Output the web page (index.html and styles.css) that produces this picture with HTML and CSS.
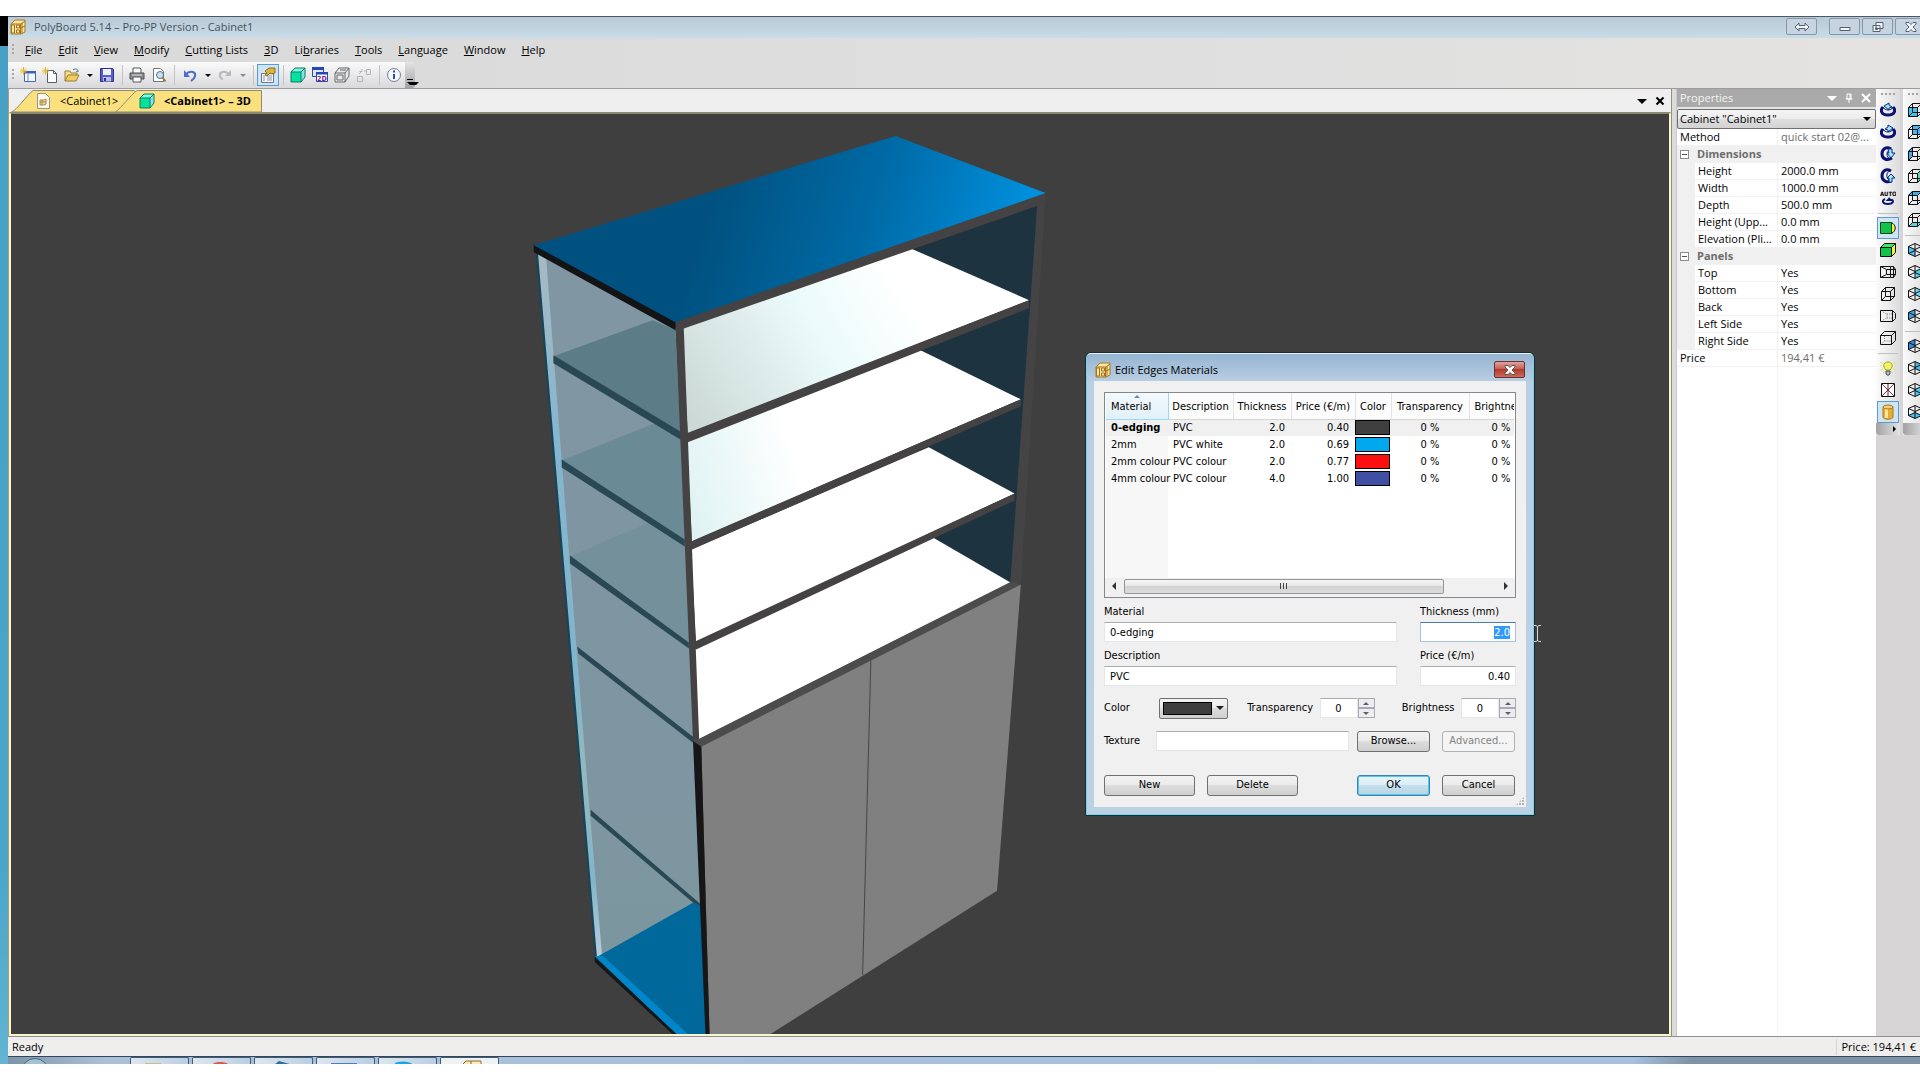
FILE: index.html
```html
<!doctype html>
<html lang="en">
<head>
    <meta charset="utf-8">
    <title>PolyBoard 5.14 – Pro-PP Version - Cabinet1</title>
    <meta name="viewport" content="width=device-width, initial-scale=1.0">
    <link rel="stylesheet" href="styles.css">
</head>
<body>

    <!-- shared icons -->
    <svg class="defs" width="0" height="0" aria-hidden="true">
        <symbol id="logo" viewBox="0 0 16 16">
            <path d="M1 5 5 1h10v12l-4 2H1z" fill="#fbe3a0" stroke="#a87a1c"/>
            <path d="M1.500 6h3v8h-3zM6.500 6h3v3h-3zM6.500 11h3v3h-3zM12 4v10M10.500 5v10M11 9l4-2M1 5h10l4-3" fill="none" stroke="#a3741a"/>
        </symbol>
        <symbol id="cube-solid" viewBox="0 0 16 16">
            <path d="M1 5 5 1h10l-4 4z" fill="#7dfbe0"/>
            <path d="M11 5l4-4v9l-4 5z" fill="#7fe6e6"/>
            <path d="M1 5h10v10H1z" fill="#04e39c"/>
            <path d="M1 5 5 1h10v9l-4 5H1zM1 5h10v10M11 5l4-4" fill="none" stroke="#127a66"/>
        </symbol>
        <symbol id="wire" viewBox="0 0 16 16">
            <path d="M1.500 5.500h9v9h-9zM5.500 1.500h9v9h-9zM1.500 5.500l4-4M10.500 5.500l4-4M1.500 14.500l4-4M10.500 14.500l4-4" fill="none" stroke="#111"/>
        </symbol>
        <symbol id="hex" viewBox="0 0 16 16">
            <path d="M1.500 4.500 8 1.500l6.500 3v7L8 14.500l-6.500-3zM1.500 4.500 8 7.500l6.500-3M8 1.500v13M1.500 11.500 8 8.500l6.500 3" fill="none" stroke="#111"/>
        </symbol>
    </svg>

    <div class="desktop"></div>

    <div class="screen">
        <div class="app">
            <header class="title-bar">
                <svg class="icon"><use href="#logo"/></svg>
                <span class="title">PolyBoard 5.14 – Pro-PP Version - Cabinet1</span>
                <button class="win-btn win-move" aria-label="Move"><svg viewBox="0 0 16 10"><path d="M1 5l4-4v2.500h6V1l4 4-4 4V6.500H5V9z"/></svg></button>
                <button class="win-btn" aria-label="Minimize"><svg viewBox="0 0 16 10"><path d="M3 5.500h10v3H3z"/></svg></button>
                <button class="win-btn" aria-label="Restore"><svg viewBox="0 0 16 10"><path d="M6 .5h7v6H6zM3 3.500h7v6H3zM5.500 6h2v1.500h-2z"/></svg></button>
                <button class="win-btn" aria-label="Close"><svg viewBox="0 0 16 10"><path d="M3 .5h3l2 2 2-2h3v1.500L10 5l3 3v1.500h-3l-2-2-2 2H3V8l3-3-3-3z"/></svg></button>
            </header>

            <nav class="menu-bar">
                <span class="grip"></span>
                <button><u>F</u>ile</button>
                <button><u>E</u>dit</button>
                <button><u>V</u>iew</button>
                <button><u>M</u>odify</button>
                <button><u>C</u>utting Lists</button>
                <button><u>3</u>D</button>
                <button>Li<u>b</u>raries</button>
                <button><u>T</u>ools</button>
                <button><u>L</u>anguage</button>
                <button><u>W</u>indow</button>
                <button><u>H</u>elp</button>
            </nav>

            <div class="toolbar-row">
                <div class="toolbar">
                    <span class="grip"></span>
                    <button aria-label="New cabinet"><svg class="icon" viewBox="0 0 16 16"><path d="M4.500 4.500h11v10h-11z" fill="#f4f8ff" stroke="#4668b0"/><path d="M4 4h12v2.500H4z" fill="#3e62b8"/><path d="M8 7v7" stroke="#6a86c4"/><path d="M3.500 0v8M0 4h7M1 1.500l5 5M6 1.500l-5 5" stroke="#e8b923"/></svg></button>
                    <button aria-label="New"><svg class="icon" viewBox="0 0 16 16"><path d="M5.500 3.500h6l3 3v9h-9z" fill="#fff" stroke="#555e70"/><path d="M11.500 3.500v3h3" fill="none" stroke="#555e70"/><path d="M3.500 0v8M0 4h7M1 1.500l5 5M6 1.500l-5 5" stroke="#e8b923"/></svg></button>
                    <button aria-label="Open"><svg class="icon" viewBox="0 0 16 16"><path d="M1 14V4h5l1 2h6v3" fill="#f3dc8a" stroke="#94803a"/><path d="M1 14 4 8h11l-3 6z" fill="#f0cd58" stroke="#94803a"/><path d="M9 3c3-2 5-1 5 2l-2-1" fill="none" stroke="#4f7a9c"/></svg></button>
                    <button class="drop" aria-label="Open recent"></button>
                    <button aria-label="Save"><svg class="icon" viewBox="0 0 16 16"><path d="M1.500 1.500h12l1 1v12h-13z" fill="#5a5fc4" stroke="#2d3190"/><path d="M4 2h8v6H4z" fill="#eef0fb"/><path d="M4 10h8v4.500H4z" fill="#b9bce6"/><path d="M5 11h2v3H5z" fill="#2d3190"/></svg></button>
                    <span class="sep"></span>
                    <button aria-label="Print"><svg class="icon" viewBox="0 0 16 16"><path d="M4 6V1h7l1 1v4" fill="#fff" stroke="#555"/><path d="M1 6h14v6H1z" fill="#8c8f94" stroke="#4c4f54"/><path d="M4 10h8v5H4z" fill="#fff" stroke="#555"/><path d="M3 8h10" stroke="#ddd"/></svg></button>
                    <button aria-label="Print preview"><svg class="icon" viewBox="0 0 16 16"><path d="M2.500 1.500h7l3 3v10h-10z" fill="#fff" stroke="#6c7480"/><circle cx="9" cy="8" r="3.500" fill="#bfe2f4" stroke="#5d7080"/><path d="M11.500 10.500l3 4" stroke="#a07c34" stroke-width="2"/></svg></button>
                    <span class="sep wide"></span>
                    <button aria-label="Undo"><svg class="icon" viewBox="0 0 16 16"><path d="M4 7c5-4 10-2 9 2-.5 3-2.500 4-4 5" fill="none" stroke="#4a6fc8" stroke-width="2"/><path d="M2 3v7h6z" fill="#4a6fc8"/></svg></button>
                    <button class="drop" aria-label="Undo list"></button>
                    <button aria-label="Redo" disabled><svg class="icon" viewBox="0 0 16 16"><path d="M12 7C7 3 2 5 3 9c.5 2 2 3 3 3" fill="none" stroke="#b9b9bb" stroke-width="2"/><path d="M14 3v6H8z" fill="#b9b9bb"/></svg></button>
                    <button class="drop" aria-label="Redo list" disabled></button>
                    <span class="sep"></span>
                    <button class="active" aria-label="Properties"><svg class="icon" viewBox="0 0 16 16"><path d="M1.500 6.500h12v9h-12z" fill="#f4f6fa" stroke="#6e7787"/><path d="M3 9h2M7 9h5M3 11h2M7 11h5M3 13h2M7 13h5" stroke="#8a94a6"/><path d="M5 4l4-3h6v5l-3 1-2-1-3 3-2-1 2-2z" fill="#dcb443" stroke="#8d6c1c"/></svg></button>
                    <span class="sep"></span>
                    <button aria-label="3D view"><svg class="icon"><use href="#cube-solid"/></svg></button>
                    <button aria-label="2D view"><svg class="icon" viewBox="0 0 16 16"><path d="M.5.500h11v9H.500z" fill="#dfe6f8" stroke="#2c49a4"/><path d="M0 0h12v3H0z" fill="#2447b4"/><path d="M4.500 5.500h11v9h-11z" fill="#fff" stroke="#2c49a4"/><path d="M4 5h12v2.500H4z" fill="#2447b4"/><text x="5" y="14" class="icon-text purple">2D</text></svg></button>
                    <button aria-label="Wireframe"><svg class="icon" viewBox="0 0 16 16"><path d="M1 6 5 1h10v8l-4 6H1zM1 6h10v9M11 6l4-5M3 8h6v5H3zM6 3h6" fill="#e9e9ea" stroke="#66686c"/></svg></button>
                    <button aria-label="Export" disabled><svg class="icon" viewBox="0 0 16 16"><path d="M1.500 9.500h5v5h-5zM10.500 2.500h4v5h-4zM3 7l3-3M6 2v2.500H3.500M8 4h2" fill="none" stroke="#b4b4b6"/></svg></button>
                    <span class="sep"></span>
                    <button aria-label="About"><svg class="icon" viewBox="0 0 16 16"><circle cx="8" cy="8" r="6.500" fill="#f5f7fc" stroke="#76809a"/><path d="M8 3.500v2M8 7v5" stroke="#2b4ea8" stroke-width="2"/></svg></button>
                </div>
                <button class="more" aria-label="Toolbar options"></button>
            </div>

            <main class="work">
                <section class="view">
                    <div class="tabs">
                        <button class="tab">
                            <svg class="tab-shape" viewBox="0 0 128 22" preserveAspectRatio="none"><path d="M.5 22C6 20 16 5 22 .5h101l5 4V22z"/></svg>
                            <svg class="icon" viewBox="0 0 16 16"><path d="M2.500.500h8l4 4v11h-12z" fill="#fbf8f0" stroke="#9a9484"/><path d="M5 7h4l2-1v5l-2 1H5zM5 9h6M7 7v5" fill="#f4dca0" stroke="#a98a4a"/></svg>
                            <span>&lt;Cabinet1&gt;</span>
                        </button>
                        <button class="tab current">
                            <svg class="tab-shape" viewBox="0 0 148 22" preserveAspectRatio="none"><path d="M.5 22C6 18 16 5 22 .5h125.500V22z"/></svg>
                            <svg class="icon"><use href="#cube-solid"/></svg>
                            <span>&lt;Cabinet1&gt; – 3D</span>
                        </button>
                        <span class="spacer"></span>
                        <button class="tab-tool" aria-label="Tab list"><svg viewBox="0 0 10 10"><path d="M0 3h10L5 8z"/></svg></button>
                        <button class="tab-tool" aria-label="Close tab"><svg viewBox="0 0 10 10"><path d="M1.500 1.500l7 7M8.500 1.500l-7 7" stroke="#000" stroke-width="2"/></svg></button>
                    </div>

                    <div class="viewport">
                        <!-- cabinet in perspective -->
                        <svg class="scene" viewBox="11 114 1657 919" preserveAspectRatio="xMidYMid slice">
                            <defs>
                                <linearGradient id="top" gradientUnits="userSpaceOnUse" x1="720" y1="150" x2="1010" y2="235">
                                    <stop offset="0" stop-color="#00517f"/>
                                    <stop offset=".5" stop-color="#006aa6"/>
                                    <stop offset="1" stop-color="#0091df"/>
                                </linearGradient>
                                <linearGradient id="back1" gradientUnits="userSpaceOnUse" x1="690" y1="430" x2="900" y2="310">
                                    <stop offset="0" stop-color="#cbd8d5"/>
                                    <stop offset=".6" stop-color="#eafafa"/>
                                    <stop offset="1" stop-color="#ffffff"/>
                                </linearGradient>
                                <linearGradient id="back2" gradientUnits="userSpaceOnUse" x1="680" y1="500" x2="790" y2="470">
                                    <stop offset="0" stop-color="#dff3f3"/>
                                    <stop offset="1" stop-color="#ffffff"/>
                                </linearGradient>
                                <linearGradient id="glass" gradientUnits="userSpaceOnUse" x1="0" y1="260" x2="0" y2="950">
                                    <stop offset="0" stop-color="#8196a3"/>
                                    <stop offset="1" stop-color="#7c96a0"/>
                                </linearGradient>
                                <linearGradient id="strip" gradientUnits="userSpaceOnUse" x1="0" y1="260" x2="0" y2="950">
                                    <stop offset="0" stop-color="#a6bac4"/>
                                    <stop offset=".25" stop-color="#86b6cf"/>
                                    <stop offset=".6" stop-color="#82b4cc"/>
                                    <stop offset=".75" stop-color="#94b9bd"/>
                                    <stop offset=".9" stop-color="#83b5c9"/>
                                    <stop offset="1" stop-color="#b4cadb"/>
                                </linearGradient>
                            </defs>

                            <g transform="matrix(1.033 0 0 1 -17 0)">
                                <!-- left side -->
                                <path d="M535 254 592 956l4 0L539 254z" fill="#17465a"/>
                                <path d="M537 252 594 955l6 0 99-50L670 328z" fill="url(#strip)"/>
                                <path d="M545 258 670 328l26 580-97 46L583 760 560 460z" fill="url(#glass)"/>
                                <path d="M552 356l96-36 22 10 5 103z" fill="#5c7d87"/>
                                <path d="M560 460l90-37 25 14 4 103z" fill="#6a8b95"/>
                                <path d="M568 556l80-36 31 20 4 102z" fill="#73909b"/>
                                <g fill="#294854">
                                    <path d="M552 355l124 77v8L552 363z"/>
                                    <path d="M560 459l119 80v7L560 467z"/>
                                    <path d="M568 555l115 87v6L568 563z"/>
                                    <path d="M575 646l112 90v6L576 653z"/>
                                    <path d="M588 809l106 94v5L588 815z"/>
                                </g>
                                <path d="M594 956l93-54 8 3 6 128h-28z" fill="#00689b"/>
                                <path d="M592 955l8 0 82 78h-12z" fill="#0086c9"/>
                                <path d="M592 956l79 77h-4L592 961z" fill="#10181c"/>

                                <!-- right side and back -->
                                <path d="M897 248l125-44-28 378-80 20z" fill="#1d3440"/>
                                <path d="M1020 203l8-10-24 391-10-3z" fill="#454445"/>
                                <path d="M676 328l221-80 115 52-330 134z" fill="url(#back1)"/>
                                <path d="M681 441l226-91 97 49-318 142z" fill="url(#back2)"/>
                                <path d="M685 549l230-102 83 46-308 149z" fill="#fff"/>
                                <path d="M688 649l231-112 75 45-302 157z" fill="#fff"/>

                                <!-- edges -->
                                <g fill="#444243">
                                    <path d="M681 433l331-133v8L682 442z"/>
                                    <path d="M685 541l319-142v7L686 549z"/>
                                    <path d="M689 641l309-148v7L690 649z"/>
                                    <path d="M670 322l8 4 15 414-6 0z"/>
                                    <path d="M670 322l358-129v10L676 329l-6 2z"/>
                                </g>
                                <path d="M687 740l6-2 302-157 9 3-309 163z" fill="#4c4c4c"/>

                                <!-- top -->
                                <path d="M533 244l137 77v9L533 252z" fill="#121416"/>
                                <path d="M533 245 883 136l145 57-358 129z" fill="url(#top)"/>

                                <!-- doors -->
                                <path d="M695 746l309-162-23 306-219 143h-59z" fill="#808080"/>
                                <path d="M687 740l8 6 8 287h-4z" fill="#161616"/>
                                <path d="M855 655l4 4-8 315" fill="none" stroke="#484848"/>
                            </g>
                        </svg>
                    </div>

                    <!-- edge materials dialog -->
                    <form class="dialog" onsubmit="return false">
                        <div class="dialog-title">
                            <svg class="icon"><use href="#logo"/></svg>
                            <span>Edit Edges Materials</span>
                            <button type="button" class="dialog-close" aria-label="Close"><svg viewBox="0 0 12 10"><path d="M1 .5h3l2 2 2-2h3v1.500L8 5l3 3v1.500H8l-2-2-2 2H1V8l3-3-3-3z"/></svg></button>
                        </div>
                        <div class="dialog-body">
                            <div class="list">
                                <div class="list-view">
                                    <table>
                                        <colgroup>
                                            <col class="c-material"><col class="c-desc"><col class="c-thick"><col class="c-price"><col class="c-color"><col class="c-trans"><col class="c-bright">
                                        </colgroup>
                                        <thead>
                                            <tr><th class="sorted">Material</th><th>Description</th><th>Thickness</th><th>Price (€/m)</th><th>Color</th><th>Transparency</th><th>Brightne</th></tr>
                                        </thead>
                                        <tbody>
                                            <tr class="selected"><td>0-edging</td><td>PVC</td><td>2.0</td><td>0.40</td><td><span class="swatch dark"></span></td><td>0 %</td><td>0 %</td></tr>
                                            <tr><td>2mm</td><td>PVC white</td><td>2.0</td><td>0.69</td><td><span class="swatch cyan"></span></td><td>0 %</td><td>0 %</td></tr>
                                            <tr><td>2mm colour</td><td>PVC colour</td><td>2.0</td><td>0.77</td><td><span class="swatch red"></span></td><td>0 %</td><td>0 %</td></tr>
                                            <tr><td>4mm colour</td><td>PVC colour</td><td>4.0</td><td>1.00</td><td><span class="swatch blue"></span></td><td>0 %</td><td>0 %</td></tr>
                                        </tbody>
                                    </table>
                                </div>
                                <div class="scroll">
                                    <span class="arrow left"></span>
                                    <div class="track"><div class="thumb"><i></i><i></i><i></i></div></div>
                                    <span class="arrow right"></span>
                                </div>
                            </div>

                            <div class="fields">
                                <label for="material">Material</label>
                                <label for="thickness">Thickness (mm)</label>
                                <input type="text" id="material" value="0-edging">
                                <div class="number focused"><input type="text" id="thickness" value="2.0"></div>
                                <label for="description">Description</label>
                                <label for="price">Price (€/m)</label>
                                <input type="text" id="description" value="PVC">
                                <div class="number"><input type="text" id="price" value="0.40"></div>
                            </div>

                            <div class="row color-row">
                                <label for="color" class="lead">Color</label>
                                <button type="button" id="color" class="color-btn"><span class="swatch dark"></span><span class="caret"></span></button>
                                <label for="transparency">Transparency</label>
                                <span class="spin"><input type="text" id="transparency" value="0"><span class="steps"><button type="button" aria-label="Up"></button><button type="button" aria-label="Down"></button></span></span>
                                <label for="brightness">Brightness</label>
                                <span class="spin"><input type="text" id="brightness" value="0"><span class="steps"><button type="button" aria-label="Up"></button><button type="button" aria-label="Down"></button></span></span>
                            </div>

                            <div class="row texture-row">
                                <label for="texture" class="lead">Texture</label>
                                <input type="text" id="texture">
                                <button type="button" class="btn small">Browse...</button>
                                <button type="button" class="btn small" disabled>Advanced...</button>
                            </div>

                            <div class="row buttons">
                                <button type="button" class="btn">New</button>
                                <button type="button" class="btn">Delete</button>
                                <span class="spacer"></span>
                                <button type="submit" class="btn small default">OK</button>
                                <button type="button" class="btn small">Cancel</button>
                            </div>
                        </div>
                        <span class="size-grip"></span>
                        <svg class="cursor" viewBox="0 0 7 17"><path d="M0 .5h2l1.500 1L5 .5h2M3.500 1v15M0 16.500h2l1.500-1 1.500 1h2"/></svg>
                    </form>
                </section>

                <aside class="properties">
                    <div class="panel-head">
                        <span>Properties</span>
                        <svg viewBox="0 0 10 10"><path d="M0 3h10L5 8z" fill="#fff"/></svg>
                        <svg viewBox="0 0 10 10"><path d="M3 1h4v5H3zM1.500 6h7M5 6v4M6 1v5" fill="none" stroke="#fff"/></svg>
                        <svg viewBox="0 0 10 10"><path d="M1 1l8 8M9 1l-8 8" stroke="#fff" stroke-width="2"/></svg>
                    </div>
                    <div class="picker">
                        <select aria-label="Object"><option>Cabinet "Cabinet1"</option></select>
                    </div>
                    <table class="grid">
                        <colgroup><col class="g-pad"><col class="g-name"><col></colgroup>
                        <tr><td colspan="2">Method</td><td class="muted">quick start 02@...</td></tr>
                        <tr class="group"><th><i class="minus"></i></th><th colspan="2">Dimensions</th></tr>
                        <tr><td></td><td>Height</td><td>2000.0 mm</td></tr>
                        <tr><td></td><td>Width</td><td>1000.0 mm</td></tr>
                        <tr><td></td><td>Depth</td><td>500.0 mm</td></tr>
                        <tr><td></td><td>Height (Upp...</td><td>0.0 mm</td></tr>
                        <tr><td></td><td>Elevation (Pli...</td><td>0.0 mm</td></tr>
                        <tr class="group"><th><i class="minus"></i></th><th colspan="2">Panels</th></tr>
                        <tr><td></td><td>Top</td><td>Yes</td></tr>
                        <tr><td></td><td>Bottom</td><td>Yes</td></tr>
                        <tr><td></td><td>Back</td><td>Yes</td></tr>
                        <tr><td></td><td>Left Side</td><td>Yes</td></tr>
                        <tr><td></td><td>Right Side</td><td>Yes</td></tr>
                        <tr><td colspan="2">Price</td><td class="muted">194,41 €</td></tr>
                    </table>
                    <div class="grid-rest"></div>
                </aside>

                <div class="side-bars">
                    <div class="side-bar">
                        <span class="dots"></span>
                        <button aria-label="Rotate left"><svg class="icon" viewBox="0 0 16 16"><path d="M3 5c-3 3-2 8 5 8s8-5 5-8" fill="none" stroke="#0b1170" stroke-width="3"/><path d="M3 5c2 4 8 4 10 0" fill="none" stroke="#0b1170"/><path d="M9 1 4 4l5 4V6l3-1-3-2z" fill="#9beafa" stroke="#0b2c80"/></svg></button>
                        <button aria-label="Rotate right"><svg class="icon" viewBox="0 0 16 16"><path d="M3 5c-3 3-2 8 5 8s8-5 5-8" fill="none" stroke="#0b1170" stroke-width="3"/><path d="M3 5c2 4 8 4 10 0" fill="none" stroke="#0b1170"/><path d="M8 1l5 3-5 4V6L5 5l3-2z" fill="#9beafa" stroke="#0b2c80"/></svg></button>
                        <button aria-label="Rotate down"><svg class="icon" viewBox="0 0 16 16"><path d="M11 3C6 0 2 3 2 8s5 7 10 4" fill="none" stroke="#0b1170" stroke-width="3"/><path d="M10 4c-4 1-4 7 0 9" fill="none" stroke="#0b1170"/><path d="M8 3h4v4h3l-4 5-4-5h2z" fill="#9beafa" stroke="#0b2c80"/></svg></button>
                        <button aria-label="Rotate up"><svg class="icon" viewBox="0 0 16 16"><path d="M11 3C6 0 2 3 2 8s5 7 9 5" fill="none" stroke="#0b1170" stroke-width="3"/><path d="M10 3c-4 1-4 7-1 9" fill="none" stroke="#0b1170"/><path d="M11 6l4 4h-3v4H9v-4H7z" fill="#9beafa" stroke="#0b2c80"/></svg></button>
                        <button aria-label="Auto rotate"><svg class="icon" viewBox="0 0 16 16"><text x="0" y="6" class="icon-text">AUTO</text><path d="M5 9c-4 2-2 5 3 5s6-3 4-4H8l2-2" fill="none" stroke="#0b1170" stroke-width="2"/></svg></button>
                        <span class="line"></span>
                        <button class="active" aria-label="Solid perspective"><svg class="icon" viewBox="0 0 16 16"><path d="M11 2.500l2 1c3 3 3 6 0 9l-2 1z" fill="#f6f13c" stroke="#111"/><path d="M.5 2.500h11v11H.500z" fill="#12c24a" stroke="#0a4d18"/></svg></button>
                        <button aria-label="Solid"><svg class="icon" viewBox="0 0 16 16"><path d="M.5 5.500l4-4h11l-4 4z" fill="#39ee5e" stroke="#111"/><path d="M11.500 5.500l4-4v9l-4 4z" fill="#f6f13c" stroke="#111"/><path d="M.5 5.500h11v9H.500z" fill="#12c24a" stroke="#111"/></svg></button>
                        <button aria-label="Wire perspective"><svg class="icon" viewBox="0 0 16 16"><path d="M.5 2.500h10v11H.500zM10.500 2.500h3l2 3v5l-2 3h-3M.5 2.500l6 3M.5 13.500l6-3M6.500 5.500h9M6.500 10.500h9M6.500 5.500v5M13.500 2.500v11" fill="none" stroke="#111"/></svg></button>
                        <button aria-label="Wire"><svg class="icon"><use href="#wire"/></svg></button>
                        <button aria-label="Hidden perspective"><svg class="icon" viewBox="0 0 16 16"><path d="M.5 2.500h12l3 3v5l-3 3H.500zM12.500 2.500v11" fill="none" stroke="#111"/><path d="M3 4l4 2v4l-4 2M7 6h5M7 10h5" fill="none" stroke="#888" stroke-dasharray="1 1"/></svg></button>
                        <button aria-label="Hidden lines"><svg class="icon" viewBox="0 0 16 16"><path d="M.5 5.500l4-4h11v9l-4 4H.500zM.5 5.500h11v9M11.500 5.500l4-4" fill="none" stroke="#111"/><path d="M4.500 6v5H11M4.500 11l-3 3" fill="none" stroke="#888" stroke-dasharray="1 1"/></svg></button>
                        <span class="line"></span>
                        <button aria-label="Lighting"><svg class="icon" viewBox="0 0 16 16"><path d="M0 2l3 2M16 2l-3 2M0 10l3-1M16 10l-3-1M0 6h2M14 6h2M3 13l2-2M13 13l-2-2" stroke="#dfe861"/><path d="M6 10C2 6 4 2 8 2s6 4 2 8z" fill="#f2f65a" stroke="#9aa02c"/><path d="M6 11h4v3L8 15.500 6 14z" fill="#a9b7c4" stroke="#555"/></svg></button>
                        <button aria-label="Cross"><svg class="icon" viewBox="0 0 16 16"><path d="M1.500 1.500h13v13h-13z" fill="#fff" stroke="#111"/><path d="M2 2l12 12M14 2 2 14" stroke="#a02438"/><path d="M8 2v12" stroke="#333"/></svg></button>
                        <button class="active" aria-label="Texture"><svg class="icon" viewBox="0 0 16 16"><path d="M3 3v10c0 3 10 3 10 0V3z" fill="#e6ac34" stroke="#a8781c"/><path d="M5 4v10h3V4z" fill="#fbe596"/><ellipse cx="8" cy="3" rx="5" ry="2" fill="#f3cf70" stroke="#a8781c"/></svg></button>
                        <span class="cap"></span>
                    </div>
                    <div class="side-bar">
                        <span class="dots"></span>
                        <button aria-label="Front"><svg class="icon" viewBox="0 0 16 16"><path d="M1 5h10v10H1z" fill="#3fc4f0"/><use href="#wire"/></svg></button>
                        <button aria-label="Back"><svg class="icon" viewBox="0 0 16 16"><path d="M5 1h10v10H5z" fill="#4fb4ec"/><use href="#wire"/></svg></button>
                        <button aria-label="Left"><svg class="icon" viewBox="0 0 16 16"><path d="M1 5l4-4v10l-4 4z" fill="#4aa8e8"/><use href="#wire"/></svg></button>
                        <button aria-label="Right"><svg class="icon" viewBox="0 0 16 16"><path d="M11 5l4-4v10l-4 4z" fill="#62d4b8"/><use href="#wire"/></svg></button>
                        <button aria-label="Top"><svg class="icon" viewBox="0 0 16 16"><path d="M1 5l4-4h10l-4 4z" fill="#4aa8e8"/><use href="#wire"/></svg></button>
                        <button aria-label="Bottom"><svg class="icon" viewBox="0 0 16 16"><path d="M1 15l4-4h10l-4 4z" fill="#62d4d8"/><use href="#wire"/></svg></button>
                        <span class="line"></span>
                        <button aria-label="Corner 1"><svg class="icon" viewBox="0 0 16 16"><path d="M1.500 4.500 8 7.500v7l-6.500-3z" fill="#4cc0f0"/><use href="#hex"/></svg></button>
                        <button aria-label="Corner 2"><svg class="icon" viewBox="0 0 16 16"><path d="M8 7.500l6.500-3v7L8 14.500z" fill="#4cd0e8"/><use href="#hex"/></svg></button>
                        <button aria-label="Corner 3"><svg class="icon" viewBox="0 0 16 16"><path d="M8 1.500l6.500 3v7L8 8.500z" fill="#6fd4ee"/><use href="#hex"/></svg></button>
                        <button aria-label="Corner 4"><svg class="icon" viewBox="0 0 16 16"><path d="M1.500 4.500 8 1.500v7l-6.500 3z" fill="#3fa4e4"/><use href="#hex"/></svg></button>
                        <span class="line"></span>
                        <button aria-label="Corner 5"><svg class="icon" viewBox="0 0 16 16"><path d="M1.500 4.500 8 1.500v7l-6.500 3z" fill="#2f8ee4"/><use href="#hex"/></svg></button>
                        <button aria-label="Corner 6"><svg class="icon" viewBox="0 0 16 16"><path d="M8 1.500l6.500 3v7L8 8.500z" fill="#4cb8e8"/><use href="#hex"/></svg></button>
                        <button aria-label="Corner 7"><svg class="icon" viewBox="0 0 16 16"><path d="M8 7.500l6.500-3v7L8 14.500z" fill="#4cc8f0"/><use href="#hex"/></svg></button>
                        <button aria-label="Corner 8"><svg class="icon" viewBox="0 0 16 16"><path d="M1.500 11.500 8 8.500l6.500 3-6.500 3z" fill="#4cc0f0"/><use href="#hex"/></svg></button>
                        <span class="cap"></span>
                    </div>
                </div>
            </main>

            <footer class="status-bar">
                <span>Ready</span>
                <span class="status-price">Price: 194,41 €</span>
            </footer>
        </div>

        <div class="taskbar">
            <span class="orb"></span>
            <span class="task"><svg viewBox="0 0 56 7"><path d="M14 5h16v2H14z" fill="#c9bd84"/></svg></span>
            <span class="task"><svg viewBox="0 0 56 7"><path d="M19 7c2-4 14-4 17 0z" fill="#e0564a"/></svg></span>
            <span class="task"><svg viewBox="0 0 56 7"><path d="M19 7l5-4 14 4z" fill="#2d6d9c"/></svg></span>
            <span class="task"><svg viewBox="0 0 56 7"><path d="M14 5h26v2H14z" fill="#4b79cc"/></svg></span>
            <span class="task"><svg viewBox="0 0 56 7"><path d="M15 7c1-5 18-4 19 0z" fill="#18a5e6"/></svg></span>
            <span class="task on"><svg viewBox="0 0 56 7"><path d="M21 7l4-4h15v4M30 3v4" fill="#fbe9b8" stroke="#9a6a2c"/></svg></span>
        </div>
    </div>

    <script>
        const thickness = document.getElementById('thickness');
        thickness.focus();
        thickness.select();
    </script>

</body>
</html>
```
FILE: styles.css
```css
* {
    box-sizing: border-box;
}
body {
    display: flex;
    height: 100vh;
    margin: 0;
    padding: 16px 0;
    overflow: hidden;
    background-color: #fff;
    color: #000;
    font-family: "Open Sans", sans-serif;
    font-size: 11px;
    line-height: 16px;
}
button, input, select {
    margin: 0;
    padding: 0;
    border: none;
    border-radius: 0;
    background: none;
    color: inherit;
    font: inherit;
    outline: none;
}
svg {
    display: block;
}
.defs {
    position: absolute;
}
.icon {
    width: 16px;
    height: 16px;
    flex: none;
}
.icon-text {
    font: bold 6px "DejaVu Sans Condensed", sans-serif;
}
.purple {
    fill: #7a1c9c;
    font-size: 7px;
}
.spacer {
    flex: 1;
}

/* desktop behind the window */
.desktop {
    width: 8px;
    background: linear-gradient(#000 30px, #46a1c4 30px, #49a5c8 80%, #62b4d2);
}
.screen {
    flex: 1;
    min-width: 0;
    display: flex;
    flex-direction: column;
}
.app {
    flex: 1;
    min-height: 0;
    display: flex;
    flex-direction: column;
    background-color: #dcdbdb;
}

.title-bar {
    display: flex;
    align-items: center;
    height: 22px;
    padding: 0 0 2px 2px;
    overflow: hidden;
    border-top: 1px solid #4b5763;
    background: linear-gradient(#b9c9d5, #c9dce8);
}
.title {
    flex: 1;
    margin-left: 8px;
    color: #46525e;
}
.win-btn {
    flex: none;
    width: 31px;
    height: 17px;
    margin-left: 2px;
    border: 1px solid #8897a6;
    border-radius: 2px;
    background-color: #c5d4e0;
}
.win-move {
    margin-right: 10px;
}
.win-btn:last-child {
    margin-right: -6px;
}
.win-btn svg {
    width: 16px;
    height: 10px;
    margin: 0 auto;
    fill: #f2f6f9;
    stroke: #536070;
}

.grip {
    flex: none;
    width: 2px;
    height: 12px;
    margin: 0 3px 0 4px;
    background: repeating-linear-gradient(#a9a9ab 0 2px, transparent 2px 4px);
}
.menu-bar {
    display: flex;
    align-items: center;
    height: 24px;
    background: linear-gradient(90deg, #d9d9da, #e4e3e2);
}
.menu-bar button {
    padding: 0 8px;
}
.toolbar-row {
    display: flex;
    height: 26px;
    background: linear-gradient(90deg, #d9d9da, #e4e3e2);
}
.toolbar {
    display: flex;
    align-items: center;
    background: linear-gradient(#fafafa, #d9d9dc);
}
.toolbar button, .side-bar button {
    flex: none;
    display: flex;
    align-items: center;
    justify-content: center;
    width: 22px;
    height: 22px;
}
.toolbar .drop {
    width: 13px;
}
.drop::after {
    border: 3px solid transparent;
    border-top: 3px solid #000;
    border-bottom: none;
    content: "";
}
.drop:disabled::after {
    border-top-color: #8c8c8e;
}
.toolbar .active, .side-bar .active {
    border: 1px solid #5a9bd6;
    background-color: #cfe5f5;
}
.sep {
    width: 1px;
    height: 20px;
    margin: 0 3px 0 4px;
    background-color: #c3c3c6;
}
.sep.wide {
    margin-right: 4px;
}
.more {
    width: 10px;
    border-radius: 0 3px 3px 0;
    background: linear-gradient(#e4e4e5, #a2a2a5);
}
.more::after {
    display: block;
    width: 6px;
    margin: 14px 0 0 2px;
    border: 3px solid transparent;
    border-top: 3px solid #000;
    border-bottom: none;
    content: "";
}
.more::before {
    display: block;
    width: 6px;
    height: 1px;
    margin: 14px 0 -12px 2px;
    background-color: #000;
    content: "";
}

.work {
    flex: 1;
    min-height: 0;
    display: flex;
    border-top: 1px solid #9c9c9c;
    border-bottom: 1px solid #909090;
}
.view {
    position: relative;
    flex: 1;
    min-width: 0;
    display: flex;
    flex-direction: column;
    margin-right: 4px;
    border-right: 1px solid #8f9474;
    border-left: 1px solid #b59d6c;
    background-color: #efefef;
}
.tabs {
    display: flex;
    height: 23px;
    padding: 1px 2px 0;
}
.tab {
    position: relative;
    display: flex;
    align-items: center;
    width: 128px;
    margin-right: -24px;
    padding-left: 24px;
}
.tab.current {
    width: 147px;
    font-weight: bold;
}
.tab span, .tab .icon {
    position: relative;
}
.tab span {
    margin-left: 9px;
}
.tab-shape {
    position: absolute;
    top: 0;
    left: 0;
    width: 100%;
    height: 100%;
    fill: #fbe07e;
    stroke: #8e8a78;
}
.tab-tool {
    width: 18px;
    padding: 0 4px;
}
.tab-tool svg {
    width: 10px;
    height: 10px;
}
.viewport {
    flex: 1;
    min-height: 0;
    border: 2px solid #f9f7cf;
    border-top-color: #8d8a72;
    background-color: #403f40;
}
.scene {
    width: 100%;
    height: 100%;
}

/* dialog */
.dialog {
    position: absolute;
    top: 264px;
    left: 1077px;
    width: 448px;
    padding: 0 7px 7px;
    border: 1px solid #6fd6ee;
    border-top-color: #e6f1f8;
    border-radius: 5px 5px 0 0;
    background: linear-gradient(#96b4d1, #b9cfe3 28px, #bad2e4);
    box-shadow: 0 0 0 1px #1c2b33;
    font-family: "DejaVu Sans Condensed", sans-serif;
    line-height: 14px;
}
.dialog-title {
    display: flex;
    align-items: center;
    height: 27px;
    padding: 4px 1px 0;
    font-family: "Open Sans", sans-serif;
}
.dialog-title span {
    flex: 1;
    margin-left: 4px;
}
.dialog-close {
    width: 31px;
    height: 17px;
    border: 1px solid #6d3038;
    border-radius: 2px;
    background: linear-gradient(#dda59d, #c4574a 50%, #b03c31 50%, #cc6a58);
}
.dialog-close svg {
    width: 12px;
    height: 10px;
    margin: 0 auto;
    fill: #fff;
    stroke: #6a5052;
}
.dialog-body {
    padding: 11px 10px 11px;
    background-color: #f0f0f0;
}
.list {
    height: 206px;
    display: flex;
    flex-direction: column;
    border: 1px solid #828790;
    background-color: #fff;
}
.list-view {
    flex: 1;
    overflow: hidden;
    margin: 0 1px;
    background: linear-gradient(90deg, #f7f7f7 62px, #fff 62px);
}
.list table {
    width: 427px;
    border-collapse: collapse;
    table-layout: fixed;
}
.c-material { width: 62px; }
.c-desc { width: 65px; }
.c-thick { width: 58px; }
.c-price { width: 64px; }
.c-color { width: 36px; }
.c-trans { width: 78px; }
.c-bright { width: 64px; }
.list th {
    height: 26px;
    padding: 3px 0 0;
    border-right: 1px solid #e2e3ea;
    border-bottom: 1px solid #d5d5d5;
    background-color: #fcfcfc;
    font-weight: normal;
    text-align: center;
    white-space: nowrap;
}
.list th:last-child {
    padding-left: 5px;
    text-align: left;
}
.list .sorted {
    position: relative;
    border-color: #96d9f9;
    background: linear-gradient(#f2f9fc, #e1f1f9);
    text-align: left;
    padding-left: 5px;
}
.sorted::after {
    position: absolute;
    top: 2px;
    left: 28px;
    border: 3px solid transparent;
    border-top: none;
    border-bottom: 3px solid #6c8fa5;
    content: "";
}
.list td {
    height: 17px;
    padding: 0 6px;
    white-space: nowrap;
}
.list td:first-child, .list td:nth-child(2) {
    padding: 0 0 0 5px;
}
.list td:nth-child(3), .list td:nth-child(4) {
    text-align: right;
}
.list td:nth-child(5) {
    padding: 0 1px 0 0;
}
.list td:nth-child(n+6) {
    text-align: center;
}
.list .selected {
    background-color: #f0f0f0;
}
.selected td:first-child {
    font-weight: bold;
}
.swatch {
    display: block;
    height: 15px;
    border: 1px solid #000;
}
.dark { background-color: #3f3f40; }
.cyan { background-color: #00a8ee; }
.red { background-color: #fc1010; }
.blue { background-color: #3f50a4; }

.scroll {
    display: flex;
    align-items: center;
    height: 19px;
    padding: 0 7px 3px;
    background-color: #f0f0f0;
}
.arrow {
    border: 4px solid transparent;
}
.arrow.left {
    border-right-color: #333;
    border-left: none;
}
.arrow.right {
    border-left-color: #333;
    border-right: none;
}
.track {
    flex: 1;
    padding: 0 8px;
}
.thumb {
    display: flex;
    align-items: center;
    justify-content: center;
    gap: 2px;
    width: 86%;
    height: 15px;
    border: 1px solid #979797;
    border-radius: 2px;
    background: linear-gradient(#f5f5f5, #e6e6e6 50%, #d3d3d3 50%, #dcdcdc);
}
.thumb i {
    width: 1px;
    height: 6px;
    background-color: #444;
}

.fields {
    display: grid;
    grid-template-columns: 1fr 96px;
    grid-template-rows: 24px 20px 24px 20px;
    column-gap: 23px;
    align-items: center;
}
.fields label {
    padding-top: 4px;
}
.dialog input {
    width: 100%;
    height: 20px;
    padding: 0 5px;
    border: 1px solid #e3e6ea;
    border-top-color: #abadb3;
    background-color: #fff;
}
.dialog input::selection {
    background-color: #3399ff;
    color: #fff;
}
.number input {
    text-align: right;
}
.number.focused input {
    border-color: #a8c4dc;
    border-top-color: #4c7cae;
}
.row {
    display: flex;
    align-items: center;
    height: 22px;
}
.color-row {
    margin-top: 11px;
}
.lead {
    width: 52px;
}
.color-btn {
    display: flex;
    align-items: center;
    gap: 4px;
    width: 69px;
    height: 21px;
    margin: 0 17px 0 3px;
    padding: 0 3px;
    border: 1px solid #707070;
    border-radius: 2px;
    background: linear-gradient(#f2f2f2, #ebebeb 50%, #dddddd 50%, #cfcfcf);
}
.color-btn .swatch {
    width: 50px;
    height: 13px;
}
.caret {
    border: 4px solid transparent;
    border-top: 4px solid #222;
    border-bottom: none;
}
.spin {
    display: flex;
    width: 55px;
    height: 20px;
    margin-left: auto;
}
.color-row label:nth-of-type(n+2) {
    width: 68px;
    margin-right: 6px;
    text-align: right;
}
.color-row label:last-of-type {
    width: 54px;
    margin-left: 26px;
}
.spin input {
    flex: 1;
    min-width: 0;
    text-align: center;
}
.steps {
    display: flex;
    flex-direction: column;
    width: 17px;
}
.steps button {
    flex: 1;
    display: flex;
    align-items: center;
    justify-content: center;
    border: 1px solid #a9a9b4;
    background-color: #ededf0;
}
.steps button::after {
    border: 3px solid transparent;
    border-bottom: 3px solid #5d5d74;
    border-top: none;
    content: "";
}
.steps button:last-child::after {
    border-top: 3px solid #5d5d74;
    border-bottom: none;
}
.texture-row {
    margin-top: 11px;
}
.texture-row input {
    flex: 1;
    min-width: 0;
    margin-right: 8px;
}
.btn {
    width: 91px;
    height: 21px;
    border: 1px solid #707070;
    border-radius: 3px;
    background: linear-gradient(#f2f2f2, #ebebeb 50%, #dddddd 50%, #cfcfcf);
}
.btn.small {
    width: 73px;
}
.btn + .btn {
    margin-left: 12px;
}
.btn:disabled {
    border-color: #adb2b5;
    background: #f4f4f4;
    color: #838383;
}
.btn.default {
    border-color: #3c7fb1;
    background: linear-gradient(#e8f3f8, #dcecf4 50%, #c4dfec 50%, #b5d6e6);
    box-shadow: inset 0 0 0 1px #52c8ea;
}
.buttons {
    margin-top: 22px;
}
.buttons, .texture-row {
    padding-right: 1px;
}
.size-grip {
    position: absolute;
    right: 9px;
    bottom: 9px;
    width: 8px;
    height: 8px;
    background: radial-gradient(circle at 1px 1px, #b4b8bc 1px, transparent 1px) 0 0 / 3px 3px;
    clip-path: polygon(100% 0, 100% 100%, 0 100%);
}
.cursor {
    position: absolute;
    top: 271px;
    left: 447px;
    width: 7px;
    height: 17px;
    fill: none;
    stroke: #d4d4d4;
}

/* properties panel */
.properties {
    display: flex;
    flex-direction: column;
    width: 200px;
    border-left: 1px solid #c9c9c9;
    background-color: #fff;
}
.panel-head {
    display: flex;
    align-items: center;
    gap: 7px;
    height: 18px;
    padding: 0 5px 0 3px;
    background-color: #aaaaaa;
    color: #f4f4f4;
}
.panel-head span {
    flex: 1;
}
.panel-head svg {
    width: 10px;
    height: 10px;
}
.picker {
    position: relative;
    padding-top: 2px;
    background-color: #e4e4e4;
}
.picker select {
    display: block;
    width: 100%;
    height: 20px;
    padding-left: 2px;
    appearance: none;
    border: 1px solid #6f6f6f;
    border-radius: 2px;
    background: linear-gradient(#f4f4f4, #ececec 50%, #dedede 50%, #d2d2d2);
    letter-spacing: normal;
}
.picker::after {
    position: absolute;
    top: 10px;
    right: 5px;
    border: 4px solid transparent;
    border-top: 4px solid #000;
    border-bottom: none;
    content: "";
}
.grid {
    width: 100%;
    border-spacing: 0;
    table-layout: fixed;
    line-height: 16px;
}
.g-pad { width: 17px; }
.g-name { width: 83px; }
.grid td, .grid th {
    height: 17px;
    padding: 0 0 0 3px;
    border-bottom: 1px solid #f1f1f1;
    text-align: left;
    white-space: nowrap;
}
.grid td + td {
    border-left: 1px solid #f1f1f1;
}
.grid td:first-child:not([colspan]) {
    border-color: #f0f0f0;
    background-color: #f0f0f0;
}
.group {
    background-color: #f0f0f0;
    color: #6d6d6d;
}
.grid .muted {
    color: #6d6d6d;
}
.minus {
    display: block;
    width: 9px;
    height: 9px;
    border: 1px solid #8b8b8b;
    background: linear-gradient(#555, #555) center / 5px 1px no-repeat #fff;
}
.grid-rest {
    flex: 1;
    margin-left: 100px;
    border-left: 1px solid #f4f4f4;
}

.side-bars {
    display: flex;
    gap: 3px;
    width: 44px;
    overflow: hidden;
    background-color: #d6d4d5;
}
.side-bar {
    flex: none;
    display: flex;
    flex-direction: column;
    align-items: center;
    align-self: flex-start;
    width: 24px;
    background: linear-gradient(90deg, #fbfbfb, #dcdcde);
}
.dots {
    width: 14px;
    height: 2px;
    margin: 4px 0;
    background: repeating-linear-gradient(90deg, #a3a3a5 0 2px, transparent 2px 4px);
}
.line {
    width: 20px;
    height: 1px;
    margin: 4px 0 3px;
    background-color: #c0c0c3;
}
.cap {
    width: 24px;
    height: 12px;
    border-radius: 0 0 3px 3px;
    background: linear-gradient(90deg, #a2a2a5, #e4e4e5);
}
.cap::after {
    display: block;
    width: 3px;
    margin: 3px 0 0 17px;
    border: 3px solid transparent;
    border-left: 3px solid #000;
    border-right: none;
    content: "";
}

.status-bar {
    display: flex;
    justify-content: space-between;
    align-items: center;
    height: 19px;
    padding: 1px 4px 0;
    background-color: #efeeec;
}
.status-price {
    padding-left: 4px;
    border-left: 1px solid #d4d4d4;
}

.taskbar {
    display: flex;
    gap: 3px;
    height: 8px;
    padding-left: 13px;
    overflow: hidden;
    border-top: 1px solid #33475c;
    background: linear-gradient(90deg, #7d94a8, #a9c0d8 5%, #a6c0de 85%, #7f93a8 88%);
}
.orb {
    width: 28px;
    height: 28px;
    margin: 1px 78px 0 0;
    border: 1px solid #46637c;
    border-radius: 50%;
    background-color: #a4c2d4;
}
.task {
    width: 59px;
    border: 1px solid #3f5c74;
    border-bottom: none;
    border-radius: 2px 2px 0 0;
    background: linear-gradient(90deg, #dde6ee, #b9cee4);
}
.task.on {
    background: #eef2f5;
}
.task svg {
    width: 56px;
    height: 7px;
}
```
